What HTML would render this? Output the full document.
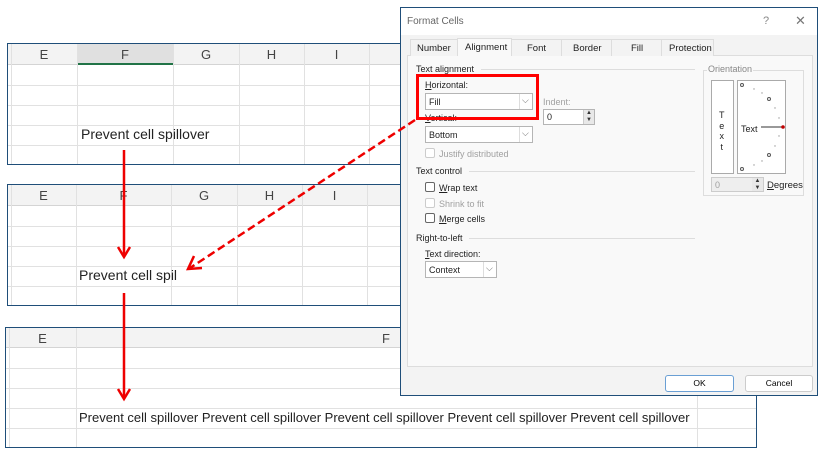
<!DOCTYPE html>
<html><head><style>
*{margin:0;padding:0;box-sizing:border-box}
body{width:822px;height:451px;background:#fff;position:relative;overflow:hidden;font-family:"Liberation Sans",sans-serif}
.a{position:absolute}
.sheet{position:absolute;border:1px solid #1f4e79;background:#fff;overflow:hidden}
.hl{position:absolute;height:1px;background:#e1e1e1;left:0;right:0}
.vl{position:absolute;width:1px;background:#e1e1e1;top:0;bottom:0}
.hdr{position:absolute;left:0;right:0;top:0;background:#f3f3f3;border-bottom:1px solid #d4d4d4}
.col{position:absolute;font-size:13px;color:#444;text-align:center}
.ct{position:absolute;font-size:13px;color:#222;white-space:nowrap}
.d{font-size:9px;color:#222;position:absolute;white-space:nowrap}
.g{color:#a0a0a0}
.box{position:absolute;background:#fff;border:1px solid #b5b5b5}
.chk{position:absolute;width:10px;height:10px;border:1px solid #666;border-radius:2px;background:#fff}
.sep{position:absolute;height:1px;background:#ddd}
</style></head><body>

<!-- Sheet 1 -->
<div class="sheet" style="left:7px;top:43px;width:400px;height:122px">
 <div class="hdr" style="height:21px"></div>
 <div class="a" style="left:69px;top:0;width:96px;height:21px;background:#e0e0e0;border-bottom:2px solid #217346"></div>
 <div class="vl" style="left:3px"></div><div class="vl" style="left:69px"></div><div class="vl" style="left:165px"></div><div class="vl" style="left:231px"></div><div class="vl" style="left:296px"></div><div class="vl" style="left:361px"></div>
 <div class="hl" style="top:41px"></div><div class="hl" style="top:61px"></div><div class="hl" style="top:81px"></div><div class="hl" style="top:101px"></div>
 <div class="col" style="left:3px;width:66px;top:3px">E</div><div class="col" style="left:69px;width:96px;top:3px">F</div><div class="col" style="left:165px;width:66px;top:3px">G</div><div class="col" style="left:231px;width:65px;top:3px">H</div><div class="col" style="left:296px;width:65px;top:3px">I</div>
 <div class="ct" style="left:73px;top:82px;font-size:14px">Prevent cell spillover</div>
</div>

<!-- Sheet 2 -->
<div class="sheet" style="left:7px;top:184px;width:400px;height:122px">
 <div class="hdr" style="height:21px"></div>
 <div class="vl" style="left:3px"></div><div class="vl" style="left:68px"></div><div class="vl" style="left:163px"></div><div class="vl" style="left:229px"></div><div class="vl" style="left:294px"></div><div class="vl" style="left:359px"></div>
 <div class="hl" style="top:41px"></div><div class="hl" style="top:61px"></div><div class="hl" style="top:81px"></div><div class="hl" style="top:101px"></div>
 <div class="col" style="left:3px;width:65px;top:3px">E</div><div class="col" style="left:68px;width:95px;top:3px">F</div><div class="col" style="left:163px;width:66px;top:3px">G</div><div class="col" style="left:229px;width:65px;top:3px">H</div><div class="col" style="left:294px;width:65px;top:3px">I</div>
 <div class="ct" style="left:71px;top:82px;font-size:14px">Prevent cell spil</div>
</div>

<!-- Sheet 3 -->
<div class="sheet" style="left:5px;top:327px;width:752px;height:121px">
 <div class="hdr" style="height:20px"></div>
 <div class="vl" style="left:3px"></div><div class="vl" style="left:70px"></div><div class="vl" style="left:691px"></div>
 <div class="hl" style="top:40px"></div><div class="hl" style="top:60px"></div><div class="hl" style="top:80px"></div><div class="hl" style="top:100px"></div>
 <div class="col" style="left:3px;width:67px;top:3px">E</div><div class="col" style="left:370px;width:20px;top:3px">F</div>
 <div class="ct" style="left:73px;top:82px">Prevent cell spillover Prevent cell spillover Prevent cell spillover Prevent cell spillover Prevent cell spillover</div>
</div>

<!-- Dialog -->
<div class="a" style="left:400px;top:7px;width:418px;height:389px;background:#f3f3f3;border:1px solid #1f4e79">
 <div class="a" style="left:0;top:0;right:0;height:27px;background:#fff"></div>
 <div class="d" style="left:6px;top:8px;font-size:10px;color:#666">Format Cells</div>
 <div class="d" style="left:362px;top:7px;font-size:11px;color:#888">?</div>
 <div class="d" style="left:394px;top:5px;font-size:13px;color:#777">✕</div>
 <div class="a" style="left:6px;top:47px;width:406px;height:312px;background:#f9f9f9;border:1px solid #ddd"></div>
 <div class="a" style="left:9px;top:31px;width:48px;height:17px;background:#f3f3f3;border:1px solid #ddd;border-bottom:none"></div>
 <div class="a" style="left:56px;top:30px;width:55px;height:18px;background:#f9f9f9;border:1px solid #ddd;border-bottom:none"></div>
 <div class="a" style="left:110px;top:31px;width:51px;height:17px;background:#f3f3f3;border:1px solid #ddd;border-bottom:none"></div>
 <div class="a" style="left:160px;top:31px;width:51px;height:17px;background:#f3f3f3;border:1px solid #ddd;border-bottom:none"></div>
 <div class="a" style="left:210px;top:31px;width:51px;height:17px;background:#f3f3f3;border:1px solid #ddd;border-bottom:none"></div>
 <div class="a" style="left:260px;top:31px;width:53px;height:17px;background:#f3f3f3;border:1px solid #ddd;border-bottom:none"></div>
 <div class="d" style="left:16px;top:35px;font-size:9.5px">Number</div>
 <div class="d" style="left:64px;top:34px;font-size:9.5px">Alignment</div>
 <div class="d" style="left:126px;top:35px;font-size:9.5px">Font</div>
 <div class="d" style="left:172px;top:35px;font-size:9.5px">Border</div>
 <div class="d" style="left:230px;top:35px;font-size:9.5px">Fill</div>
 <div class="d" style="left:268px;top:35px;font-size:9.5px">Protection</div>

 <div class="d" style="left:15px;top:56px">Text alignment</div><div class="sep" style="left:80px;top:61px;width:214px"></div>
 <div class="d" style="left:24px;top:72px"><u>H</u>orizontal:</div>
 <div class="box" style="left:24px;top:85px;width:108px;height:17px"></div>
 <div class="d" style="left:28px;top:89px">Fill</div>
 <div class="a" style="left:118px;top:86px;width:1px;height:15px;background:#ddd"></div>
 <div class="d" style="left:121px;top:87px;color:#666">⌵</div>
 <div class="d g" style="left:142px;top:89px">Indent:</div>
 <div class="box" style="left:142px;top:101px;width:52px;height:16px"></div>
 <div class="d" style="left:146px;top:104px">0</div>
 <div class="a" style="left:182px;top:102px;width:11px;height:14px;background:#e8e8e8;border-left:1px solid #ccc;font-size:6px;line-height:7px;text-align:center;color:#333">▲<br>▼</div>
 <div class="d" style="left:24px;top:105px"><u>V</u>ertical:</div>
 <div class="box" style="left:24px;top:118px;width:108px;height:17px"></div>
 <div class="d" style="left:28px;top:122px">Bottom</div>
 <div class="a" style="left:118px;top:119px;width:1px;height:15px;background:#ddd"></div>
 <div class="d" style="left:121px;top:120px;color:#666">⌵</div>
 <div class="chk" style="left:24px;top:140px;border-color:#ccc"></div>
 <div class="d g" style="left:38px;top:141px">Justify distributed</div>

 <div class="d" style="left:15px;top:158px">Text control</div><div class="sep" style="left:68px;top:163px;width:226px"></div>
 <div class="chk" style="left:24px;top:174px"></div><div class="d" style="left:38px;top:175px"><u>W</u>rap text</div>
 <div class="chk" style="left:24px;top:190px;border-color:#ccc"></div><div class="d g" style="left:38px;top:191px">Shrink to fit</div>
 <div class="chk" style="left:24px;top:205px"></div><div class="d" style="left:38px;top:206px"><u>M</u>erge cells</div>

 <div class="d" style="left:15px;top:225px">Right-to-left</div><div class="sep" style="left:68px;top:230px;width:226px"></div>
 <div class="d" style="left:24px;top:241px"><u>T</u>ext direction:</div>
 <div class="box" style="left:24px;top:253px;width:72px;height:17px"></div>
 <div class="d" style="left:28px;top:257px">Context</div>
 <div class="a" style="left:82px;top:254px;width:1px;height:15px;background:#ddd"></div>
 <div class="d" style="left:85px;top:255px;color:#666">⌵</div>

 <div class="a" style="left:302px;top:62px;width:101px;height:126px;border:1px solid #ddd"></div>
 <div class="d g" style="left:306px;top:56px;background:#f9f9f9;padding:0 1px;color:#888">Orientation</div>
 <div class="box" style="left:310px;top:72px;width:23px;height:94px;border-color:#aaa"></div>
 <div class="d" style="left:318px;top:102px;line-height:10.5px;text-align:center">T<br>e<br>x<br>t</div>
 <div class="box" style="left:336px;top:72px;width:49px;height:94px;border-color:#aaa"></div>
 <svg class="a" style="left:336px;top:72px" width="49" height="94">
  <g fill="#999"><circle cx="17" cy="9" r="0.7"/><circle cx="25" cy="13" r="0.7"/><circle cx="38" cy="28" r="0.7"/><circle cx="42" cy="38" r="0.7"/><circle cx="42" cy="56" r="0.7"/><circle cx="38" cy="66" r="0.7"/><circle cx="25" cy="81" r="0.7"/><circle cx="17" cy="85" r="0.7"/></g>
  <g fill="none" stroke="#555" stroke-width="1"><circle cx="5" cy="5" r="1.5"/><circle cx="32" cy="19" r="1.5"/><circle cx="32" cy="75" r="1.5"/><circle cx="5" cy="89" r="1.5"/></g>
  <line x1="24" y1="47" x2="45" y2="47" stroke="#333" stroke-width="1"/>
  <circle cx="46" cy="47" r="1.8" fill="#c00000"/>
 </svg>
 <div class="d" style="left:340px;top:116px">Text</div>
 <div class="a" style="left:310px;top:169px;width:53px;height:15px;background:#eee;border:1px solid #ccc"></div>
 <div class="d g" style="left:314px;top:172px">0</div>
 <div class="a" style="left:351px;top:170px;width:11px;height:13px;background:#e8e8e8;font-size:6px;line-height:6.5px;text-align:center;color:#333">▲<br>▼</div>
 <div class="d" style="left:366px;top:172px;font-size:9.5px"><u>D</u>egrees</div>

 <div class="a" style="left:264px;top:367px;width:69px;height:17px;background:#fff;border:1px solid #6a9fd4;border-radius:3px;font-size:8.5px;text-align:center;line-height:15px">OK</div>
 <div class="a" style="left:344px;top:367px;width:68px;height:17px;background:#fff;border:1px solid #ccc;border-radius:3px;font-size:8.5px;text-align:center;line-height:15px">Cancel</div>
</div>

<svg class="a" style="left:0;top:0" width="822" height="451">
 <rect x="417.5" y="75.5" width="120" height="43" fill="none" stroke="#ff0000" stroke-width="3"/>
 <line x1="124" y1="150" x2="124" y2="255" stroke="#ee0000" stroke-width="2.5"/>
 <polyline points="118,247 124,257 130,247" fill="none" stroke="#ee0000" stroke-width="2.5"/>
 <line x1="124" y1="293" x2="124" y2="397" stroke="#ee0000" stroke-width="2.5"/>
 <polyline points="118,389 124,399 130,389" fill="none" stroke="#ee0000" stroke-width="2.5"/>
 <line x1="415" y1="120" x2="190" y2="268" stroke="#ee0000" stroke-width="2.5" stroke-dasharray="8,4"/>
 <polyline points="194,256 188,269 202,268" fill="none" stroke="#ee0000" stroke-width="2.5"/>
</svg>
</body></html>
